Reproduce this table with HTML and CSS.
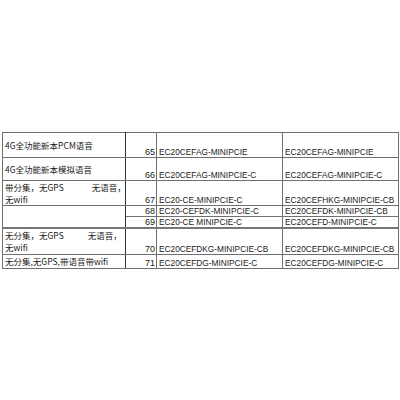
FILE: index.html
```html
<!DOCTYPE html>
<html lang="zh">
<head>
<meta charset="utf-8">
<link rel="stylesheet" href="styles.css">
</head>
<body>
<div class="page">
<table class="grid">
  <colgroup>
    <col class="c1"><col class="c2"><col class="c3"><col class="c4">
  </colgroup>
  <tr class="r1">
    <td class="desc">4G全功能新本PCM语音</td>
    <td class="num">65</td>
    <td class="model">EC20CEFAG-MINIPCIE</td>
    <td class="model">EC20CEFAG-MINIPCIE</td>
  </tr>
  <tr class="r2">
    <td class="desc">4G全功能新本模拟语音</td>
    <td class="num">66</td>
    <td class="model">EC20CEFAG-MINIPCIE-C</td>
    <td class="model">EC20CEFAG-MINIPCIE-C</td>
  </tr>
  <tr class="r3">
    <td class="desc">带分集，无GPS<span class="gap1">无语音，</span><br>无wifi</td>
    <td class="num">67</td>
    <td class="model">EC20-CE-MINIPCIE-C</td>
    <td class="model">EC20CEFHKG-MINIPCIE-CB</td>
  </tr>
  <tr class="r4">
    <td class="desc" rowspan="2"></td>
    <td class="num">68</td>
    <td class="model">EC20-CEFDK-MINIPCIE-C</td>
    <td class="model">EC20CEFDK-MINIPCIE-CB</td>
  </tr>
  <tr class="r5">
    <td class="num">69</td>
    <td class="model">EC20-CE MINIPCIE-C</td>
    <td class="model">EC20CEFD-MINIPCIE-C</td>
  </tr>
  <tr class="r6">
    <td class="desc">无分集，无GPS<span class="gap2">无语音，</span><br>无wifi</td>
    <td class="num">70</td>
    <td class="model">EC20CEFDKG-MINIPCIE-CB</td>
    <td class="model">EC20CEFDKG-MINIPCIE-CB</td>
  </tr>
  <tr class="r7">
    <td class="desc">无分集,无GPS,带语音带wifi</td>
    <td class="num">71</td>
    <td class="model">EC20CEFDG-MINIPCIE-C</td>
    <td class="model">EC20CEFDG-MINIPCIE-C</td>
  </tr>
</table>
</div>
</body>
</html>
```
FILE: styles.css
```css
html, body {
  margin: 0;
  padding: 0;
  background: #ffffff;
}

.page {
  width: 400px;
  height: 400px;
  padding: 132px 0 0 2px;
  box-sizing: border-box;
}

.grid {
  border-collapse: collapse;
  table-layout: fixed;
  width: 396px;
  color: #1a1a1a;
}

.c1 { width: 123px; }
.c2 { width: 31px; }
.c3 { width: 126px; }
.c4 { width: 116px; }

.grid td {
  border: 1px solid #707070;
  padding: 0;
  overflow: hidden;
  white-space: nowrap;
}

.desc {
  font-family: "Noto Sans CJK SC", "Noto Sans", sans-serif;
  font-size: 8.5px;
  line-height: 12px;
  vertical-align: middle;
  padding-left: 2px !important;
  border-right: 1px solid #333 !important;
}

.num {
  font-family: "Liberation Sans", Arial, sans-serif;
  font-size: 9px;
  line-height: 10px;
  text-align: right;
  vertical-align: bottom;
  padding-right: 1px !important;
}

.model {
  font-family: "Liberation Sans", Arial, sans-serif;
  font-size: 8.3px;
  line-height: 10px;
  vertical-align: bottom;
  padding-left: 2px !important;
}

.gap1 { margin-left: 28px; }
.gap2 { margin-left: 24px; }

.r1 { height: 25px; }
.r2 { height: 23px; }
.r3 { height: 22px; }
.r4 { height: 11px; }
.r5 { height: 11px; }
.r6 { height: 26px; }
.r7 { height: 14px; }

.r6 td { border-top: 2px solid #777; }
```
